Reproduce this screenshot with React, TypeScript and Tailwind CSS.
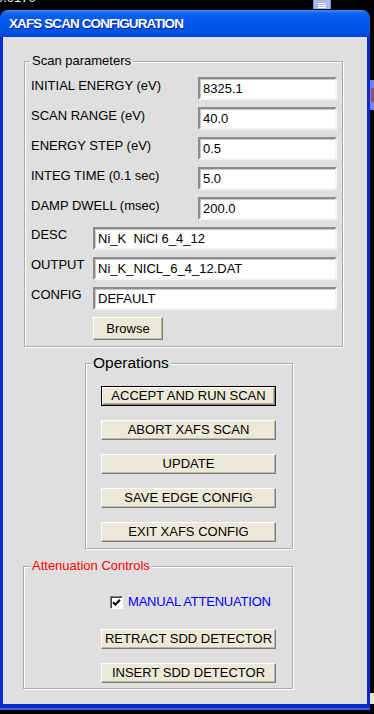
import React from "react";

const params = [
  { label: "INITIAL ENERGY (eV)", value: "8325.1" },
  { label: "SCAN RANGE (eV)", value: "40.0" },
  { label: "ENERGY STEP (eV)", value: "0.5" },
  { label: "INTEG TIME (0.1 sec)", value: "5.0" },
  { label: "DAMP DWELL (msec)", value: "200.0" },
];

const files = [
  { label: "DESC", value: "Ni_K  NiCl 6_4_12" },
  { label: "OUTPUT", value: "Ni_K_NICL_6_4_12.DAT" },
  { label: "CONFIG", value: "DEFAULT" },
];

const operations = ["ACCEPT AND RUN SCAN", "ABORT XAFS SCAN", "UPDATE", "SAVE EDGE CONFIG", "EXIT XAFS CONFIG"];

function Field({ value, width }: { value: string; width: string }) {
  return (
    <div
      className={`${width} h-[23px] shrink-0 flex items-center bg-white pl-[3px] border-2 border-t-[#8c8c8c] border-l-[#8c8c8c] border-b-[#f4f4f4] border-r-[#f4f4f4] shadow-[inset_1px_1px_0_#c8c8c8] text-[13px] text-black whitespace-pre`}
    >
      {value}
    </div>
  );
}

function Button({ label, width, primary }: { label: string; width: string; primary?: boolean }) {
  const face = (
    <div className="h-full w-full flex items-center justify-center bg-[#ece9d8] border border-t-white border-l-white border-b-[#7d7d7d] border-r-[#7d7d7d] shadow-[inset_-1px_-1px_0_#b9b6a8] text-[13px] text-black">
      {label}
    </div>
  );
  return <div className={`${width} h-[20px] ${primary ? "border border-black" : ""}`}>{face}</div>;
}

function Group({
  legend,
  legendClass,
  className,
  children,
}: {
  legend: string;
  legendClass: string;
  className: string;
  children: React.ReactNode;
}) {
  return (
    <fieldset className={`border border-[#ababab] shadow-[inset_1px_1px_0_#fff,1px_1px_0_#fff] ${className}`}>
      <legend className={`px-[2px] bg-[#dfdfdf] ${legendClass}`}>{legend}</legend>
      {children}
    </fieldset>
  );
}

export default function App() {
  return (
    <div className="w-[374px] h-[714px] bg-black overflow-hidden font-['Liberation_Sans',Arial,sans-serif]">
      {/* strip above the window */}
      <div className="h-[10px] flex overflow-hidden">
        <div className="-ml-[4px] -mt-[9px] text-[13px] leading-[14px] text-white">0.0170</div>
        <div className="ml-auto mr-[43px] w-[18px] h-[9px] bg-[#a9b9ee] border-x border-[#8696d8] flex flex-col items-center justify-end gap-[1px] pb-[1px]">
          <div className="w-[8px] h-px bg-white" />
          <div className="w-[8px] h-px bg-white" />
          <div className="w-[8px] h-px bg-white" />
        </div>
      </div>

      <div className="flex">
        {/* window */}
        <div className="w-[370px] rounded-t-[8px] overflow-hidden">
          <div className="h-[27px] flex items-center pl-[9px] pt-[1px] bg-[linear-gradient(to_bottom,#3d8cf6_0%,#0a60f2_14%,#0058ec_50%,#0052e2_85%,#0044cc_100%)]">
            <span className="text-[13.5px] font-bold tracking-[-0.9px] text-white [text-shadow:1px_1px_0_#0a1e8a]">
              XAFS SCAN CONFIGURATION
            </span>
          </div>

          <div className="h-[671px] bg-[#dfdfdf] border-x-[3px] border-b-4 border-[#0a2bd0] flex flex-col">
            {/* Scan parameters */}
            <Group
              legend="Scan parameters"
              legendClass="ml-[5px] text-[13px] leading-[16px] text-black"
              className="ml-[21px] mt-[16px] w-[319px]"
            >
              <div className="pl-[6px] pr-[5px] pt-[8px] pb-[6px] flex flex-col gap-[7px]">
                {params.map((p) => (
                  <div key={p.label} className="flex items-start">
                    <div className="flex-1 pt-[1px] text-[13px] leading-[16px] text-black">{p.label}</div>
                    <Field value={p.value} width="w-[139px]" />
                  </div>
                ))}
                {files.map((f) => (
                  <div key={f.label} className="flex items-start">
                    <div className="flex-1 text-[13px] leading-[16px] text-black">{f.label}</div>
                    <Field value={f.value} width="w-[244px]" />
                  </div>
                ))}
                <div className="ml-[62px] w-[70px] h-[23px]">
                  <div className="h-full w-full flex items-center justify-center bg-[#ece9d8] border border-t-white border-l-white border-b-[#7d7d7d] border-r-[#7d7d7d] shadow-[inset_-1px_-1px_0_#b9b6a8] text-[13px] text-black">
                    Browse
                  </div>
                </div>
              </div>
            </Group>

            {/* Operations */}
            <Group
              legend="Operations"
              legendClass="ml-[5px] text-[15.5px] leading-[18px] text-black"
              className="ml-[82px] mt-[7px] w-[208px]"
            >
              <div className="px-[15px] pt-[14px] pb-[6px] flex flex-col gap-[14px]">
                {operations.map((op, i) => (
                  <Button key={op} label={op} width="w-[175px]" primary={i === 0} />
                ))}
              </div>
            </Group>

            {/* Attenuation */}
            <Group
              legend="Attenuation Controls"
              legendClass="ml-[6px] text-[13px] leading-[16px] text-[#ff0000]"
              className="ml-[20px] mt-[9px] w-[270px]"
            >
              <div className="pt-[20px] pb-[5px] flex flex-col">
                <div className="pl-[86px] h-[16px] flex items-center gap-[5px]">
                  <div className="w-[13px] h-[13px] bg-white border border-t-[#808080] border-l-[#808080] border-b-white border-r-white shadow-[inset_1px_1px_0_#404040] flex items-center justify-center">
                    <svg width="9" height="9" viewBox="0 0 9 9">
                      <path d="M1 4.2 L3.4 6.6 L8 1.8" fill="none" stroke="#000" strokeWidth="2" />
                    </svg>
                  </div>
                  <span className="text-[13px] leading-[16px] tracking-[-0.2px] text-[#0000ff]">MANUAL ATTENUATION</span>
                </div>
                <div className="pl-[77px] mt-[19px] flex flex-col gap-[14px]">
                  <Button label="RETRACT SDD DETECTOR" width="w-[175px]" />
                  <Button label="INSERT SDD DETECTOR" width="w-[175px]" />
                </div>
              </div>
            </Group>
          </div>
          <div className="h-[2px] bg-[#3d5fe0]" />
        </div>

        {/* strip right of the window */}
        <div className="w-[4px] flex flex-col">
          <div className="h-[70px]" />
          <div className="h-[30px] bg-[#7282e6] pl-[1px] py-[8px]">
            <div className="h-full bg-[#9c4a66]" />
          </div>
          <div className="flex-1" />
          <div className="h-[11px] bg-[#e8e4d4]" />
          <div className="h-[6px]" />
        </div>
      </div>
    </div>
  );
}
